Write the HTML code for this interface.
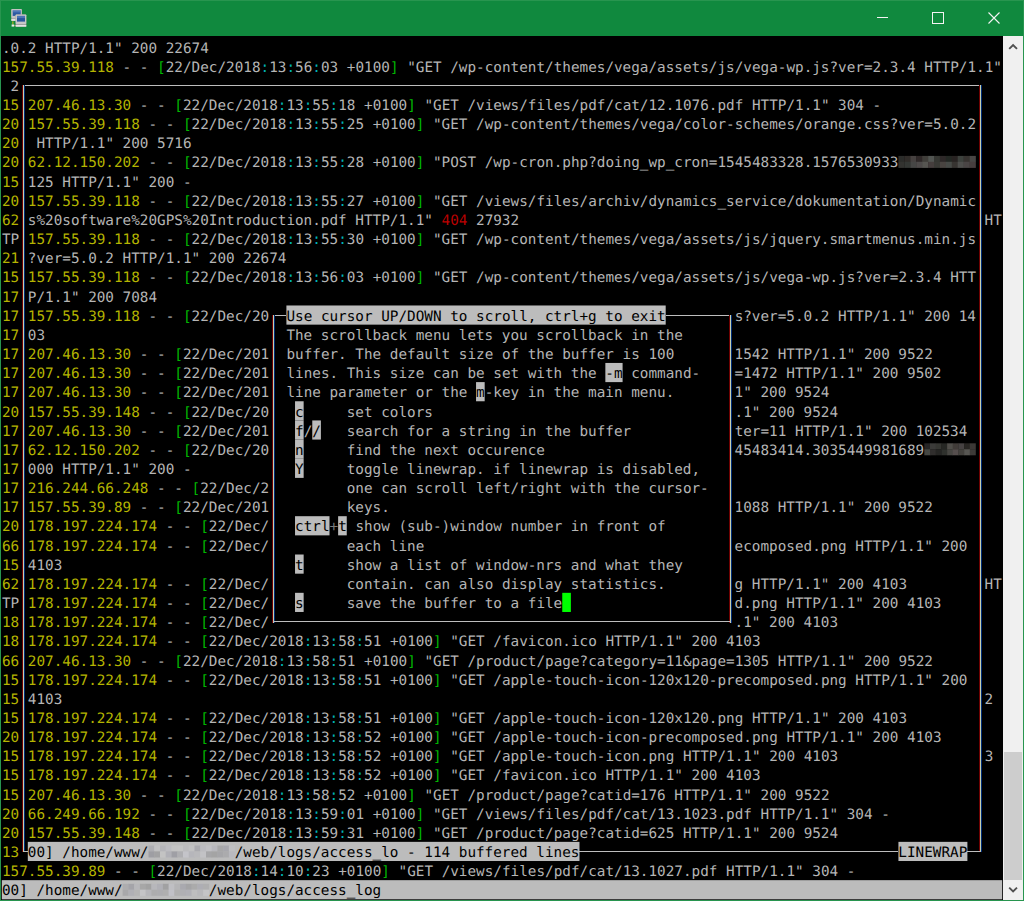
<!DOCTYPE html>
<html lang="en"><head><meta charset="utf-8"><title>PuTTY - multitail</title>
<style>
html,body{margin:0;padding:0;background:#000;}
body{width:1024px;height:901px;overflow:hidden;position:relative;font-family:"DejaVu Sans Mono","Liberation Mono",monospace;}
#win{position:absolute;left:0;top:0;width:1024px;height:901px;background:#000;overflow:hidden;}
#title{position:absolute;left:0;top:0;width:1024px;height:36px;background:#10893e;}
.bd{position:absolute;background:#28954f;}
#term{position:absolute;left:0;top:0;width:1003px;height:900px;color:#b5b5b5;}
.r{position:absolute;left:1.95px;height:19.16px;line-height:19.16px;white-space:pre;font-size:14.325px;letter-spacing:0.0025px;margin:0;text-rendering:geometricPrecision;}
.y{color:#b4b400}.g{color:#00b600}.c{color:#00b4b4}.e{color:#bb0000}
.k{color:#000}.d{color:#7a7a7a}
.bg{position:absolute;}
.ln{position:absolute;background:#bdbdbd;}
.vl{position:absolute;width:3px;background:linear-gradient(to right,#6e0000 0,#6e0000 1px,#c4d0b2 1px,#c4d0b2 2px,#002c78 2px,#002c78 3px);}
#sb{position:absolute;left:1003px;top:36px;width:20px;height:864px;background:#f0f0f0;}
#thumb{position:absolute;left:1px;top:716px;width:18px;height:128px;background:#cdcdcd;}
</style></head><body><div id="win">

<div id="title"></div>
<div class="bd" style="left:0;top:0;width:1px;height:901px"></div>
<div class="bd" style="left:1023px;top:0;width:1px;height:901px"></div>
<div class="bd" style="left:0;top:900px;width:1024px;height:1px"></div>
<div class="bd" style="left:0;top:0;width:1024px;height:1px"></div>
<svg id="tb" width="1024" height="36" viewBox="0 0 1024 36" style="position:absolute;left:0;top:0">
<g shape-rendering="auto">
<!-- back computer -->
<rect x="11.3" y="9.1" width="10.5" height="11.8" rx="0.8" fill="#8f9290"/>
<rect x="11.3" y="9.1" width="10.5" height="8.9" rx="0.8" fill="#c3c3c3"/>
<rect x="12.7" y="10.4" width="8" height="5.5" fill="#2b59a2"/>
<rect x="12.7" y="10.4" width="8" height="2" fill="#6a8fca" opacity="0.55"/>
<rect x="11.3" y="18.7" width="10.5" height="2.2" fill="#e2e2e2"/>
<!-- cable -->
<rect x="12" y="21.3" width="1.6" height="3.2" fill="#86a62c"/>
<rect x="14" y="25.2" width="2" height="0.8" fill="#86a62c"/>
<rect x="11.6" y="24.5" width="2.6" height="2.1" fill="#ececec"/>
<!-- front computer -->
<rect x="15.6" y="14.5" width="10.7" height="12.2" rx="0.8" fill="#8f9290"/>
<rect x="15.6" y="14.5" width="10.7" height="9.6" rx="0.8" fill="#c6c6c6"/>
<rect x="17" y="15.9" width="8" height="5.7" fill="#28559d"/>
<rect x="17" y="15.9" width="8" height="2.2" fill="#6a8fca" opacity="0.55"/>
<rect x="15.6" y="24.8" width="10.7" height="1.9" fill="#e4e4e4"/>
</g>
<!-- window controls -->
<rect x="877" y="17" width="11" height="1" fill="#f4f4f4"/>
<rect x="932.5" y="12.5" width="11" height="11" fill="none" stroke="#f4f4f4" stroke-width="1"/>
<path d="M988.5 12.5 L999.5 23.5 M999.5 12.5 L988.5 23.5" stroke="#f4f4f4" stroke-width="1.1" fill="none"/>
</svg>
<div id="term">
<svg width="1003" height="901" viewBox="0 0 1003 901" style="position:absolute;left:0;top:0"><rect x="286.41" y="305.48" width="379.28" height="19.16" fill="#bcbcbc"/><rect x="605.35" y="362.95" width="17.24" height="19.16" fill="#bcbcbc"/><rect x="476.05" y="382.11" width="8.62" height="19.16" fill="#bcbcbc"/><rect x="295.03" y="401.26" width="8.62" height="19.16" fill="#bcbcbc"/><rect x="295.03" y="420.42" width="8.62" height="19.16" fill="#bcbcbc"/><rect x="312.27" y="420.42" width="8.62" height="19.16" fill="#bcbcbc"/><rect x="295.03" y="439.58" width="8.62" height="19.16" fill="#bcbcbc"/><rect x="295.03" y="458.73" width="8.62" height="19.16" fill="#bcbcbc"/><rect x="295.03" y="516.2" width="34.48" height="19.16" fill="#bcbcbc"/><rect x="338.13" y="516.2" width="8.62" height="19.16" fill="#bcbcbc"/><rect x="295.03" y="554.51" width="8.62" height="19.16" fill="#bcbcbc"/><rect x="295.03" y="592.82" width="8.62" height="19.16" fill="#bcbcbc"/><rect x="562.25" y="592.82" width="8.62" height="19.16" fill="#00ff00"/><rect x="27.81" y="841.85" width="551.68" height="19.16" fill="#bcbcbc"/><rect x="898.43" y="841.85" width="68.96" height="19.16" fill="#bcbcbc"/><rect x="1.8" y="880.16" width="1000.4" height="19.16" fill="#bcbcbc"/></svg>
<div class="r" style="top:39.55px">.0.2 HTTP/1.1" 200 22674</div>
<div class="r" style="top:58.71px"><span class="y">157.55.39.118 </span>- - <span class="g">[</span>22/Dec/2018<span class="c">:</span>13<span class="c">:</span>56<span class="c">:</span>03 +0100<span class="g">] </span>"GET /wp-content/themes/vega/assets/js/vega-wp.js?ver=2.3.4 HTTP/1.1"</div>
<div class="r" style="top:77.86px"> 2</div>
<div class="r" style="top:97.02px"><span class="y">15 207.46.13.30 </span>- - <span class="g">[</span>22/Dec/2018<span class="c">:</span>13<span class="c">:</span>55<span class="c">:</span>18 +0100<span class="g">] </span>"GET /views/files/pdf/cat/12.1076.pdf HTTP/1.1" 304 -</div>
<div class="r" style="top:116.17px"><span class="y">20 157.55.39.118 </span>- - <span class="g">[</span>22/Dec/2018<span class="c">:</span>13<span class="c">:</span>55<span class="c">:</span>25 +0100<span class="g">] </span>"GET /wp-content/themes/vega/color-schemes/orange.css?ver=5.0.2</div>
<div class="r" style="top:135.33px"><span class="y">20  </span>HTTP/1.1" 200 5716</div>
<div class="r" style="top:154.49px"><span class="y">20 62.12.150.202 </span>- - <span class="g">[</span>22/Dec/2018<span class="c">:</span>13<span class="c">:</span>55<span class="c">:</span>28 +0100<span class="g">] </span>"POST /wp-cron.php?doing_wp_cron=1545483328.1576530933</div>
<div class="r" style="top:173.64px"><span class="y">15 </span>125 HTTP/1.1" 200 -</div>
<div class="r" style="top:192.8px"><span class="y">20 157.55.39.118 </span>- - <span class="g">[</span>22/Dec/2018<span class="c">:</span>13<span class="c">:</span>55<span class="c">:</span>27 +0100<span class="g">] </span>"GET /views/files/archiv/dynamics_service/dokumentation/Dynamic</div>
<div class="r" style="top:211.95px"><span class="y">62 </span>s%20software%20GPS%20Introduction.pdf HTTP/1.1" <span class="e">404 </span>27932                                                      HT</div>
<div class="r" style="top:231.11px">TP <span class="y">157.55.39.118 </span>- - <span class="g">[</span>22/Dec/2018<span class="c">:</span>13<span class="c">:</span>55<span class="c">:</span>30 +0100<span class="g">] </span>"GET /wp-content/themes/vega/assets/js/jquery.smartmenus.min.js</div>
<div class="r" style="top:250.27px"><span class="y">21 </span>?ver=5.0.2 HTTP/1.1" 200 22674</div>
<div class="r" style="top:269.42px"><span class="y">15 157.55.39.118 </span>- - <span class="g">[</span>22/Dec/2018<span class="c">:</span>13<span class="c">:</span>56<span class="c">:</span>03 +0100<span class="g">] </span>"GET /wp-content/themes/vega/assets/js/vega-wp.js?ver=2.3.4 HTT</div>
<div class="r" style="top:288.58px"><span class="y">17 </span>P/1.1" 200 7084</div>
<div class="r" style="top:307.73px"><span class="y">17 157.55.39.118 </span>- - <span class="g">[</span>22/Dec/20  <span class="k">Use cursor UP/DOWN to scroll, ctrl+g to exit        </span>s?ver=5.0.2 HTTP/1.1" 200 14</div>
<div class="r" style="top:326.89px"><span class="y">17 </span>03                            The scrollback menu lets you scrollback in the</div>
<div class="r" style="top:346.05px"><span class="y">17 207.46.13.30 </span>- - <span class="g">[</span>22/Dec/201  buffer. The default size of the buffer is 100       1542 HTTP/1.1" 200 9522</div>
<div class="r" style="top:365.2px"><span class="y">17 207.46.13.30 </span>- - <span class="g">[</span>22/Dec/201  lines. This size can be set with the <span class="k">-m </span>command-    =1472 HTTP/1.1" 200 9502</div>
<div class="r" style="top:384.36px"><span class="y">17 207.46.13.30 </span>- - <span class="g">[</span>22/Dec/201  line parameter or the <span class="k">m</span>-key in the main menu.       1" 200 9524</div>
<div class="r" style="top:403.51px"><span class="y">20 157.55.39.148 </span>- - <span class="g">[</span>22/Dec/20   <span class="k">c     </span>set colors                                   .1" 200 9524</div>
<div class="r" style="top:422.67px"><span class="y">17 207.46.13.30 </span>- - <span class="g">[</span>22/Dec/201   <span class="k">f</span>/<span class="k">/   </span>search for a string in the buffer            ter=11 HTTP/1.1" 200 102534</div>
<div class="r" style="top:441.83px"><span class="y">17 62.12.150.202 </span>- - <span class="g">[</span>22/Dec/20   <span class="k">n     </span>find the next occurence                      45483414.3035449981689</div>
<div class="r" style="top:460.98px"><span class="y">17 </span>000 HTTP/1.1" 200 -            <span class="k">Y     </span>toggle linewrap. if linewrap is disabled,</div>
<div class="r" style="top:480.14px"><span class="y">17 216.244.66.248 </span>- - <span class="g">[</span>22/Dec/2         one can scroll left/right with the cursor-</div>
<div class="r" style="top:499.29px"><span class="y">17 157.55.39.89 </span>- - <span class="g">[</span>22/Dec/201         keys.                                        1088 HTTP/1.1" 200 9522</div>
<div class="r" style="top:518.45px"><span class="y">20 178.197.224.174 </span>- - <span class="g">[</span>22/Dec/   <span class="k">ctrl</span><span class="d">+</span><span class="k">t </span>show (sub-)window number in front of</div>
<div class="r" style="top:537.61px"><span class="y">66 178.197.224.174 </span>- - <span class="g">[</span>22/Dec/         each line                                    ecomposed.png HTTP/1.1" 200</div>
<div class="r" style="top:556.76px"><span class="y">15 </span>4103                           <span class="k">t     </span>show a list of window-nrs and what they</div>
<div class="r" style="top:575.92px"><span class="y">62 178.197.224.174 </span>- - <span class="g">[</span>22/Dec/         contain. can also display statistics.        g HTTP/1.1" 200 4103         HT</div>
<div class="r" style="top:595.07px">TP <span class="y">178.197.224.174 </span>- - <span class="g">[</span>22/Dec/   <span class="k">s     </span>save the buffer to a file                    d.png HTTP/1.1" 200 4103</div>
<div class="r" style="top:614.23px"><span class="y">18 178.197.224.174 </span>- - <span class="g">[</span>22/Dec/                                                      .1" 200 4103</div>
<div class="r" style="top:633.39px"><span class="y">18 178.197.224.174 </span>- - <span class="g">[</span>22/Dec/2018<span class="c">:</span>13<span class="c">:</span>58<span class="c">:</span>51 +0100<span class="g">] </span>"GET /favicon.ico HTTP/1.1" 200 4103</div>
<div class="r" style="top:652.54px"><span class="y">66 207.46.13.30 </span>- - <span class="g">[</span>22/Dec/2018<span class="c">:</span>13<span class="c">:</span>58<span class="c">:</span>51 +0100<span class="g">] </span>"GET /product/page?category=11&amp;page=1305 HTTP/1.1" 200 9522</div>
<div class="r" style="top:671.7px"><span class="y">15 178.197.224.174 </span>- - <span class="g">[</span>22/Dec/2018<span class="c">:</span>13<span class="c">:</span>58<span class="c">:</span>51 +0100<span class="g">] </span>"GET /apple-touch-icon-120x120-precomposed.png HTTP/1.1" 200</div>
<div class="r" style="top:690.85px"><span class="y">15 </span>4103                                                                                                           2</div>
<div class="r" style="top:710.01px"><span class="y">15 178.197.224.174 </span>- - <span class="g">[</span>22/Dec/2018<span class="c">:</span>13<span class="c">:</span>58<span class="c">:</span>51 +0100<span class="g">] </span>"GET /apple-touch-icon-120x120.png HTTP/1.1" 200 4103</div>
<div class="r" style="top:729.17px"><span class="y">20 178.197.224.174 </span>- - <span class="g">[</span>22/Dec/2018<span class="c">:</span>13<span class="c">:</span>58<span class="c">:</span>52 +0100<span class="g">] </span>"GET /apple-touch-icon-precomposed.png HTTP/1.1" 200 4103</div>
<div class="r" style="top:748.32px"><span class="y">15 178.197.224.174 </span>- - <span class="g">[</span>22/Dec/2018<span class="c">:</span>13<span class="c">:</span>58<span class="c">:</span>52 +0100<span class="g">] </span>"GET /apple-touch-icon.png HTTP/1.1" 200 4103                 3</div>
<div class="r" style="top:767.48px"><span class="y">15 178.197.224.174 </span>- - <span class="g">[</span>22/Dec/2018<span class="c">:</span>13<span class="c">:</span>58<span class="c">:</span>52 +0100<span class="g">] </span>"GET /favicon.ico HTTP/1.1" 200 4103</div>
<div class="r" style="top:786.63px"><span class="y">15 207.46.13.30 </span>- - <span class="g">[</span>22/Dec/2018<span class="c">:</span>13<span class="c">:</span>58<span class="c">:</span>52 +0100<span class="g">] </span>"GET /product/page?catid=176 HTTP/1.1" 200 9522</div>
<div class="r" style="top:805.79px"><span class="y">20 66.249.66.192 </span>- - <span class="g">[</span>22/Dec/2018<span class="c">:</span>13<span class="c">:</span>59<span class="c">:</span>01 +0100<span class="g">] </span>"GET /views/files/pdf/cat/13.1023.pdf HTTP/1.1" 304 -</div>
<div class="r" style="top:824.95px"><span class="y">20 157.55.39.148 </span>- - <span class="g">[</span>22/Dec/2018<span class="c">:</span>13<span class="c">:</span>59<span class="c">:</span>31 +0100<span class="g">] </span>"GET /product/page?catid=625 HTTP/1.1" 200 9524</div>
<div class="r" style="top:844.1px"><span class="y">13 </span><span class="k">00] /home/www/          /web/logs/access_lo - 114 buffered lines                                     LINEWRAP</span></div>
<div class="r" style="top:863.26px"><span class="y">157.55.39.89 </span>- - <span class="g">[</span>22/Dec/2018<span class="c">:</span>14<span class="c">:</span>10<span class="c">:</span>23 +0100<span class="g">] </span>"GET /views/files/pdf/cat/13.1027.pdf HTTP/1.1" 304 -</div>
<div class="r" style="top:882.41px"><span class="k">00] /home/www/          /web/logs/access_log</span></div>
<div class="ln" style="left:23.5px;top:85px;width:957.32px;height:1px"></div>
<div class="vl" style="left:22px;top:85px;height:767px"></div>
<div class="vl" style="left:979px;top:85px;height:767px"></div>
<div class="ln" style="left:23.5px;top:851px;width:4.31px;height:1px"></div>
<div class="ln" style="left:579.49px;top:851px;width:318.94px;height:1px"></div>
<div class="ln" style="left:967.39px;top:851px;width:13.43px;height:1px"></div>
<div class="ln" style="left:273.48px;top:315px;width:12.93px;height:1px"></div>
<div class="ln" style="left:665.69px;top:315px;width:65.15px;height:1px"></div>
<div class="vl" style="left:272px;top:315px;height:308px"></div>
<div class="vl" style="left:729px;top:315px;height:308px"></div>
<div class="ln" style="left:273.48px;top:621px;width:457.36px;height:1px"></div>
<svg width="1003" height="901" viewBox="0 0 1003 901" style="position:absolute;left:0;top:0"><rect x="898.4" y="155.9" width="6.23" height="6.1" fill="#2b2c2a"/><rect x="904.4" y="155.9" width="6.23" height="6.1" fill="#302c29"/><rect x="910.3" y="155.9" width="6.23" height="6.1" fill="#464140"/><rect x="916.2" y="155.9" width="6.23" height="6.1" fill="#2f2828"/><rect x="922.1" y="155.9" width="6.23" height="6.1" fill="#403e3a"/><rect x="928.1" y="155.9" width="6.23" height="6.1" fill="#525552"/><rect x="934.0" y="155.9" width="6.23" height="6.1" fill="#363733"/><rect x="939.9" y="155.9" width="6.23" height="6.1" fill="#2d2828"/><rect x="945.9" y="155.9" width="6.23" height="6.1" fill="#232723"/><rect x="951.8" y="155.9" width="6.23" height="6.1" fill="#282322"/><rect x="957.7" y="155.9" width="6.23" height="6.1" fill="#3d413d"/><rect x="963.7" y="155.9" width="6.23" height="6.1" fill="#373330"/><rect x="969.6" y="155.9" width="6.23" height="6.1" fill="#484745"/><rect x="898.4" y="161.8" width="6.23" height="6.1" fill="#333330"/><rect x="904.4" y="161.8" width="6.23" height="6.1" fill="#343734"/><rect x="910.3" y="161.8" width="6.23" height="6.1" fill="#464645"/><rect x="916.2" y="161.8" width="6.23" height="6.1" fill="#4e4a4a"/><rect x="922.1" y="161.8" width="6.23" height="6.1" fill="#565551"/><rect x="928.1" y="161.8" width="6.23" height="6.1" fill="#453e3d"/><rect x="934.0" y="161.8" width="6.23" height="6.1" fill="#393935"/><rect x="939.9" y="161.8" width="6.23" height="6.1" fill="#494441"/><rect x="945.9" y="161.8" width="6.23" height="6.1" fill="#474a47"/><rect x="951.8" y="161.8" width="6.23" height="6.1" fill="#373431"/><rect x="957.7" y="161.8" width="6.23" height="6.1" fill="#4e4e4c"/><rect x="963.7" y="161.8" width="6.23" height="6.1" fill="#4a4545"/><rect x="969.6" y="161.8" width="6.23" height="6.1" fill="#463e3e"/><rect x="924.3" y="443.3" width="5.99" height="6.1" fill="#262525"/><rect x="930.0" y="443.3" width="5.99" height="6.1" fill="#3b3b39"/><rect x="935.7" y="443.3" width="5.99" height="6.1" fill="#353632"/><rect x="941.4" y="443.3" width="5.99" height="6.1" fill="#262724"/><rect x="947.1" y="443.3" width="5.99" height="6.1" fill="#504e4a"/><rect x="952.7" y="443.3" width="5.99" height="6.1" fill="#413c39"/><rect x="958.4" y="443.3" width="5.99" height="6.1" fill="#464242"/><rect x="964.1" y="443.3" width="5.99" height="6.1" fill="#282623"/><rect x="969.8" y="443.3" width="5.99" height="6.1" fill="#3c3936"/><rect x="924.3" y="449.2" width="5.99" height="6.1" fill="#454743"/><rect x="930.0" y="449.2" width="5.99" height="6.1" fill="#302e2d"/><rect x="935.7" y="449.2" width="5.99" height="6.1" fill="#252523"/><rect x="941.4" y="449.2" width="5.99" height="6.1" fill="#2f312d"/><rect x="947.1" y="449.2" width="5.99" height="6.1" fill="#474642"/><rect x="952.7" y="449.2" width="5.99" height="6.1" fill="#554e4d"/><rect x="958.4" y="449.2" width="5.99" height="6.1" fill="#44423e"/><rect x="964.1" y="449.2" width="5.99" height="6.1" fill="#575652"/><rect x="969.8" y="449.2" width="5.99" height="6.1" fill="#3d3b38"/><rect x="148.5" y="845.5" width="6.05" height="6.1" fill="#adadb1"/><rect x="154.2" y="845.5" width="6.05" height="6.1" fill="#c0c0c1"/><rect x="160.0" y="845.5" width="6.05" height="6.1" fill="#b5b5b9"/><rect x="165.7" y="845.5" width="6.05" height="6.1" fill="#bcbcc1"/><rect x="171.5" y="845.5" width="6.05" height="6.1" fill="#c3c3c3"/><rect x="177.2" y="845.5" width="6.05" height="6.1" fill="#c4c4c4"/><rect x="183.0" y="845.5" width="6.05" height="6.1" fill="#bcbcbe"/><rect x="188.7" y="845.5" width="6.05" height="6.1" fill="#c1c1c2"/><rect x="194.5" y="845.5" width="6.05" height="6.1" fill="#aaaaaf"/><rect x="200.2" y="845.5" width="6.05" height="6.1" fill="#bcbcc0"/><rect x="206.0" y="845.5" width="6.05" height="6.1" fill="#c1c1c4"/><rect x="211.7" y="845.5" width="6.05" height="6.1" fill="#b7b7bc"/><rect x="217.4" y="845.5" width="6.05" height="6.1" fill="#a7a7a8"/><rect x="223.2" y="845.5" width="6.05" height="6.1" fill="#a7a7ad"/><rect x="228.9" y="845.5" width="6.05" height="6.1" fill="#bfbfc2"/><rect x="148.5" y="851.4" width="6.05" height="6.1" fill="#9e9ea3"/><rect x="154.2" y="851.4" width="6.05" height="6.1" fill="#a2a2a3"/><rect x="160.0" y="851.4" width="6.05" height="6.1" fill="#c3c3c3"/><rect x="165.7" y="851.4" width="6.05" height="6.1" fill="#b1b1b7"/><rect x="171.5" y="851.4" width="6.05" height="6.1" fill="#9f9fa5"/><rect x="177.2" y="851.4" width="6.05" height="6.1" fill="#afafb2"/><rect x="183.0" y="851.4" width="6.05" height="6.1" fill="#c4c4c9"/><rect x="188.7" y="851.4" width="6.05" height="6.1" fill="#b6b6bb"/><rect x="194.5" y="851.4" width="6.05" height="6.1" fill="#b9b9bc"/><rect x="200.2" y="851.4" width="6.05" height="6.1" fill="#c2c2c5"/><rect x="206.0" y="851.4" width="6.05" height="6.1" fill="#a6a6a8"/><rect x="211.7" y="851.4" width="6.05" height="6.1" fill="#a4a4a4"/><rect x="217.4" y="851.4" width="6.05" height="6.1" fill="#a6a6a9"/><rect x="223.2" y="851.4" width="6.05" height="6.1" fill="#ababad"/><rect x="228.9" y="851.4" width="6.05" height="6.1" fill="#b9b9bf"/><rect x="122.6" y="883.8" width="6.05" height="6.1" fill="#adadaf"/><rect x="128.4" y="883.8" width="6.05" height="6.1" fill="#a4a4a9"/><rect x="134.1" y="883.8" width="6.05" height="6.1" fill="#b7b7ba"/><rect x="139.9" y="883.8" width="6.05" height="6.1" fill="#a7a7a7"/><rect x="145.6" y="883.8" width="6.05" height="6.1" fill="#a2a2a2"/><rect x="151.4" y="883.8" width="6.05" height="6.1" fill="#b7b7bb"/><rect x="157.1" y="883.8" width="6.05" height="6.1" fill="#b0b0b6"/><rect x="162.9" y="883.8" width="6.05" height="6.1" fill="#a1a1a2"/><rect x="168.6" y="883.8" width="6.05" height="6.1" fill="#bfbfc3"/><rect x="174.3" y="883.8" width="6.05" height="6.1" fill="#b5b5b7"/><rect x="180.1" y="883.8" width="6.05" height="6.1" fill="#a9a9af"/><rect x="185.8" y="883.8" width="6.05" height="6.1" fill="#a4a4a6"/><rect x="191.6" y="883.8" width="6.05" height="6.1" fill="#ababab"/><rect x="197.3" y="883.8" width="6.05" height="6.1" fill="#aeaeb4"/><rect x="203.1" y="883.8" width="6.05" height="6.1" fill="#afafb0"/><rect x="122.6" y="889.7" width="6.05" height="6.1" fill="#a8a8aa"/><rect x="128.4" y="889.7" width="6.05" height="6.1" fill="#b0b0b5"/><rect x="134.1" y="889.7" width="6.05" height="6.1" fill="#b5b5b5"/><rect x="139.9" y="889.7" width="6.05" height="6.1" fill="#c4c4c6"/><rect x="145.6" y="889.7" width="6.05" height="6.1" fill="#b6b6ba"/><rect x="151.4" y="889.7" width="6.05" height="6.1" fill="#adadae"/><rect x="157.1" y="889.7" width="6.05" height="6.1" fill="#adadb0"/><rect x="162.9" y="889.7" width="6.05" height="6.1" fill="#afafaf"/><rect x="168.6" y="889.7" width="6.05" height="6.1" fill="#c1c1c7"/><rect x="174.3" y="889.7" width="6.05" height="6.1" fill="#b1b1b1"/><rect x="180.1" y="889.7" width="6.05" height="6.1" fill="#b0b0b4"/><rect x="185.8" y="889.7" width="6.05" height="6.1" fill="#b1b1b7"/><rect x="191.6" y="889.7" width="6.05" height="6.1" fill="#bebebf"/><rect x="197.3" y="889.7" width="6.05" height="6.1" fill="#b8b8bb"/><rect x="203.1" y="889.7" width="6.05" height="6.1" fill="#c4c4c6"/></svg>
</div>
<div id="sb"><div id="thumb"></div><svg width="20" height="864" viewBox="0 0 20 864" style="position:absolute;left:0;top:0">
<path d="M6.2 12.9 L10.1 9 L14 12.9" fill="none" stroke="#505050" stroke-width="1.9"/>
<path d="M6.2 851.6 L10.1 855.5 L14 851.6" fill="none" stroke="#505050" stroke-width="1.9"/>
</svg></div>
</div></body></html>
